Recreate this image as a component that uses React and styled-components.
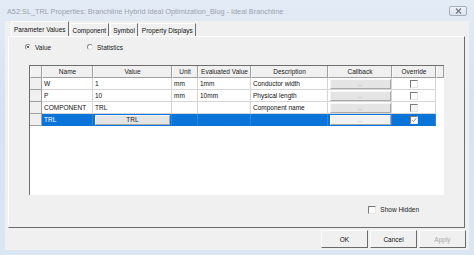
import React from "react"
import styled, { createGlobalStyle } from "styled-components"

const GlobalStyle = createGlobalStyle`
  html, body {
    margin: 0;
    padding: 0;
  }
  body {
    background: #dbe6f2;
    font-family: "Liberation Sans", Arial, sans-serif;
  }
`

const Window = styled.div`
  width: 474px;
  height: 255px;
  box-sizing: border-box;
  display: flex;
  flex-direction: column;
  padding: 0 5px 5px 5px;
  background: linear-gradient(180deg, #e3ebf5 0%, #d7e3f1 40%, #dbe6f3 100%);
`

const TitleBar = styled.div`
  height: 21px;
  display: flex;
  align-items: center;
  justify-content: space-between;
  padding: 0 2px 0 2px;
`

const Title = styled.span`
  font-size: 7.3px;
  color: #9aa3ae;
  white-space: nowrap;
  padding-top: 1px;
`

const CloseButton = styled.div`
  width: 18px;
  height: 10px;
  box-sizing: border-box;
  border: 1px solid #a3aebb;
  border-radius: 2px;
  background: linear-gradient(180deg, #f1f4f8, #dbe2eb);
  display: flex;
  align-items: center;
  justify-content: center;
  margin-top: 1px;
`

const Client = styled.div`
  flex: 1;
  background: #f0f0f0;
  display: flex;
  flex-direction: column;
  padding: 0 3px 2px 3px;
  font-size: 6.5px;
  color: #1a1a1a;
`

const TabStrip = styled.div`
  height: 15px;
  display: flex;
  align-items: flex-end;
  padding-left: 3px;
`

const Tab = styled.div`
  height: ${p => (p.$active ? 15 : 13)}px;
  box-sizing: border-box;
  display: flex;
  align-items: center;
  padding: 0 ${p => (p.$active ? 2 : 2)}px 0 2px;
  border-left: 1px solid #ffffff;
  border-top: 1px solid #ffffff;
  border-right: 1px solid #6f6f6f;
  margin-right: 1px;
  white-space: nowrap;
  color: #111;
`

const TabPanel = styled.div`
  flex: 1;
  display: flex;
  flex-direction: column;
  border-left: 1px solid #ffffff;
  border-top: 1px solid #ffffff;
  border-right: 1px solid #6d6d6d;
  border-bottom: 1px solid #6d6d6d;
  margin-right: 1px;
`

const RadioRow = styled.div`
  display: flex;
  align-items: center;
  height: 10px;
  margin-top: 5px;
  padding-left: 16px;
`

const RadioOption = styled.label`
  display: flex;
  align-items: center;
  gap: 4px;
  width: 62px;
`

const RadioCircle = styled.span`
  width: 6px;
  height: 6px;
  border-radius: 50%;
  box-sizing: border-box;
  border: 1px solid;
  border-color: #8a8a8a #e2e2e2 #e2e2e2 #8a8a8a;
  background: #ffffff;
  display: flex;
  align-items: center;
  justify-content: center;
  &::after {
    content: "";
    width: 2px;
    height: 2px;
    border-radius: 50%;
    background: ${p => (p.$checked ? "#333" : "transparent")};
  }
`

const TableBox = styled.div`
  margin: 13px 0 0 20px;
  width: 415px;
  height: 130px;
  box-sizing: border-box;
  background: #ffffff;
  border-top: 1px solid #6d6d6d;
  border-left: 1px solid #6d6d6d;
`

const Grid = styled.div`
  display: grid;
  grid-template-columns: 12px 51px 79px 26px 53px 77px 64px 44px 8px;
  grid-auto-rows: 12px;
`

const HeadCell = styled.div`
  box-sizing: border-box;
  background: #f0f0f0;
  border-right: 1px solid #a0a0a0;
  border-bottom: 1px solid #a0a0a0;
  border-left: 1px solid #fafafa;
  display: flex;
  align-items: center;
  justify-content: center;
  white-space: nowrap;
  overflow: hidden;
  color: #222;
`

const RowHead = styled.div`
  box-sizing: border-box;
  background: #f0f0f0;
  border-right: 1px solid #a0a0a0;
  border-bottom: 1px solid #a0a0a0;
`

const Cell = styled.div`
  box-sizing: border-box;
  background: ${p => (p.$selected ? "#0a74d8" : "#ffffff")};
  color: ${p => (p.$selected ? "#ffffff" : "#111")};
  border-right: 1px solid ${p => (p.$selected ? "#2a86dd" : "#d5d5d5")};
  border-bottom: 1px solid ${p => (p.$selected ? "#0a74d8" : "#d5d5d5")};
  display: flex;
  align-items: center;
  justify-content: ${p => (p.$center ? "center" : "flex-start")};
  padding-left: ${p => (p.$center || p.$flush ? 0 : 2)}px;
  white-space: nowrap;
  overflow: hidden;
`

const Filler = styled.div``

const CellButton = styled.div`
  box-sizing: border-box;
  height: 10px;
  width: ${p => p.$w}px;
  margin-left: ${p => p.$ml}px;
  background: ${p => (p.$light ? "#f2f2f2" : "#e4e4e4")};
  border: 1px solid;
  border-color: #f7f7f7 #a9a9a9 #a9a9a9 #f7f7f7;
  display: flex;
  align-items: center;
  justify-content: center;
  color: ${p => (p.$muted ? "#8a8a8a" : "#222")};
  font-size: ${p => (p.$muted ? 5 : 6.5)}px;
`

const Check = styled.span`
  width: 8px;
  height: 8px;
  box-sizing: border-box;
  border: 1px solid;
  border-color: #7a7a7a #e6e6e6 #e6e6e6 #7a7a7a;
  background: ${p => (p.$disabled ? "#f4f4f4" : "#ffffff")};
  display: inline-flex;
  align-items: center;
  justify-content: center;
`

const ShowHiddenRow = styled.div`
  display: flex;
  justify-content: flex-end;
  align-items: center;
  gap: 4px;
  margin-top: 10px;
  padding-right: 45px;
  height: 9px;
`

const ButtonRow = styled.div`
  display: flex;
  justify-content: flex-end;
  gap: 2px;
  margin-top: 2px;
  height: 18px;
`

const DialogButton = styled.div`
  width: 47px;
  box-sizing: border-box;
  border: 1px solid;
  border-color: #fbfbfb #6a6a6a #6a6a6a #fbfbfb;
  background: #f0f0f0;
  display: flex;
  align-items: center;
  justify-content: center;
  color: ${p => (p.$disabled ? "#a8a8a8" : "#111")};
`

const CheckMark = () => (
  <svg width="6" height="6" viewBox="0 0 6 6">
    <path d="M0.8 3 L2.4 4.6 L5.2 1.2" stroke="#8c8c8c" strokeWidth="1" fill="none" />
  </svg>
)

const rows = [
  { name: "W", value: "1", unit: "mm", evaluated: "1mm", desc: "Conductor width" },
  { name: "P", value: "10", unit: "mm", evaluated: "10mm", desc: "Physical length" },
  { name: "COMPONENT", value: "TRL", unit: "", evaluated: "", desc: "Component name", disabled: true },
  { name: "TRL", value: "TRL", unit: "", evaluated: "", desc: "", selected: true, checked: true },
]

const headers = ["Name", "Value", "Unit", "Evaluated Value", "Description", "Callback", "Override"]

export default function App() {
  return (
    <>
      <GlobalStyle />
      <Window>
        <TitleBar>
          <Title>A52:SL_TRL Properties: Branchline Hybrid Ideal Optimization_Blog - Ideal Branchline</Title>
          <CloseButton>
            <svg width="7" height="6" viewBox="0 0 7 6">
              <path d="M1 0.5 L6 5.5 M6 0.5 L1 5.5" stroke="#6f7986" strokeWidth="1.2" />
            </svg>
          </CloseButton>
        </TitleBar>
        <Client>
          <TabStrip>
            <Tab $active>Parameter Values</Tab>
            <Tab>Component</Tab>
            <Tab>Symbol</Tab>
            <Tab>Property Displays</Tab>
          </TabStrip>
          <TabPanel>
            <RadioRow>
              <RadioOption>
                <RadioCircle $checked />
                Value
              </RadioOption>
              <RadioOption>
                <RadioCircle />
                Statistics
              </RadioOption>
            </RadioRow>
            <TableBox>
              <Grid>
                <HeadCell />
                {headers.map(h => (
                  <HeadCell key={h}>{h}</HeadCell>
                ))}
                <HeadCell />
                {rows.map(r => (
                  <React.Fragment key={r.name}>
                    <RowHead />
                    <Cell $selected={r.selected}>{r.name}</Cell>
                    <Cell $selected={r.selected} $flush={r.selected}>
                      {r.selected ? (
                        <CellButton $w={75} $ml={2}>{r.value}</CellButton>
                      ) : (
                        r.value
                      )}
                    </Cell>
                    <Cell $selected={r.selected}>{r.unit}</Cell>
                    <Cell $selected={r.selected}>{r.evaluated}</Cell>
                    <Cell $selected={r.selected}>{r.desc}</Cell>
                    <Cell $selected={r.selected} $center>
                      <CellButton $w={61} $ml={1} $muted $light={r.selected}>...</CellButton>
                    </Cell>
                    <Cell $selected={r.selected} $center>
                      <Check $disabled={r.disabled}>{r.checked && <CheckMark />}</Check>
                    </Cell>
                    <Filler />
                  </React.Fragment>
                ))}
              </Grid>
            </TableBox>
            <ShowHiddenRow>
              <Check />
              Show Hidden
            </ShowHiddenRow>
          </TabPanel>
          <ButtonRow>
            <DialogButton>OK</DialogButton>
            <DialogButton>Cancel</DialogButton>
            <DialogButton $disabled>Apply</DialogButton>
          </ButtonRow>
        </Client>
      </Window>
    </>
  )
}
